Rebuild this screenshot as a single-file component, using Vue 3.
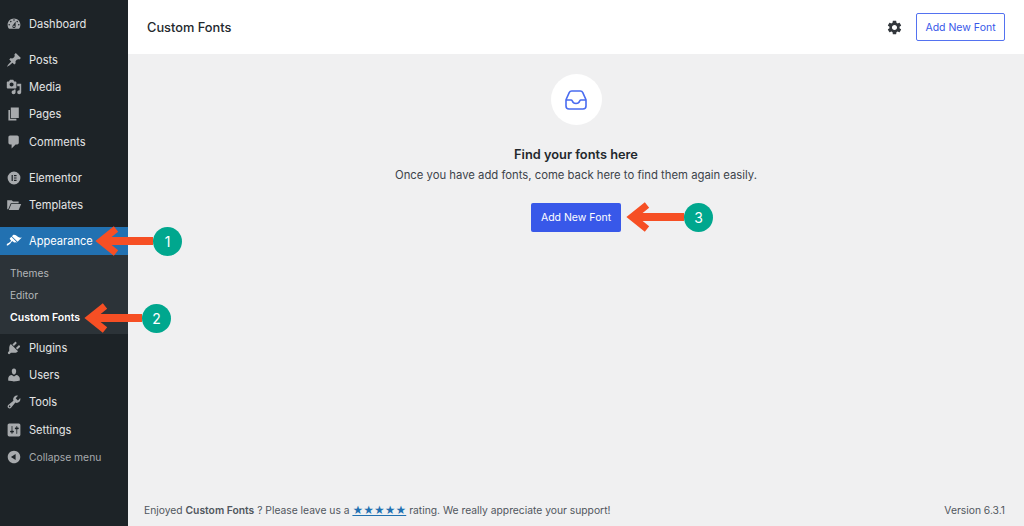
<script setup>
const topItems = [
  { label: 'Dashboard', d: 'M3.76 16h12.48c1.1-1.37 1.76-3.11 1.76-5 0-4.42-3.58-8-8-8s-8 3.58-8 8c0 1.89.66 3.63 1.76 5zM10 4c.55 0 1 .45 1 1s-.45 1-1 1-1-.45-1-1 .45-1 1-1zM6 6c.55 0 1 .45 1 1s-.45 1-1 1-1-.45-1-1 .45-1 1-1zm8 0c.55 0 1 .45 1 1s-.45 1-1 1-1-.45-1-1 .45-1 1-1zm-5.37 5.55L12 7v6c0 1.1-.9 2-2 2s-2-.9-2-2c0-.57.24-1.08.63-1.45zM4 10c.55 0 1 .45 1 1s-.45 1-1 1-1-.45-1-1 .45-1 1-1zm12 0c.55 0 1 .45 1 1s-.45 1-1 1-1-.45-1-1 .45-1 1-1zm-5 3c0-.55-.45-1-1-1s-1 .45-1 1 .45 1 1 1 1-.45 1-1z' }
]
const contentItems = [
  { label: 'Posts', d: 'M10.44 3.02l1.82-1.82 6.36 6.35-1.83 1.82c-1.05-.68-2.48-.57-3.41.36l-.75.75c-.92.93-1.04 2.35-.35 3.41l-1.83 1.82-2.41-2.41-2.8 2.79c-.42.42-3.38 2.71-3.8 2.29s1.86-3.39 2.28-3.81l2.79-2.79L4.1 9.36l1.83-1.82c1.05.69 2.48.57 3.4-.36l.75-.75c.93-.92 1.05-2.35.36-3.41z' },
  { label: 'Media', d: 'M13 11V4c0-.55-.45-1-1-1h-1.67L9 1H5L3.67 3H2c-.55 0-1 .45-1 1v7c0 .55.45 1 1 1h10c.55 0 1-.45 1-1zM7 4.5c1.38 0 2.5 1.12 2.5 2.5S8.38 9.5 7 9.5 4.5 8.38 4.5 7 5.62 4.5 7 4.5zM14 6h5v10.5c0 1.38-1.12 2.5-2.5 2.5S14 17.88 14 16.5s1.12-2.5 2.5-2.5c.17 0 .34.02.5.05V9h-3V6zm-4 8.05V13h2v3.5c0 1.38-1.12 2.5-2.5 2.5S7 17.88 7 16.5 8.12 14 9.5 14c.17 0 .34.02.5.05z' },
  { label: 'Pages', d: 'M6 15V2h10v13H6zm-1 1h8v2H3V5h2v11z' },
  { label: 'Comments', d: 'M5 2h9c1.1 0 2 .9 2 2v7c0 1.1-.9 2-2 2h-2l-5 5v-5H5c-1.1 0-2-.9-2-2V4c0-1.1.9-2 2-2z' }
]
const builderItems = [
  { label: 'Elementor', d: 'M10 2a8 8 0 1 0 0 16 8 8 0 0 0 0-16zM7 6.4h1.5v7.2H7V6.4zm3 0h3.2v1.4H10V6.4zm0 2.9h3.2v1.4H10V9.3zm0 2.9h3.2v1.4H10v-1.4z' },
  { label: 'Templates', d: 'M1.5 4h5.6l1.7 1.7h7v2H6L2.8 15.4H1.5V4zm5.2 4.7H19l-3.2 7.6H3.5l3.2-7.6z' }
]
const bottomItems = [
  { label: 'Plugins', d: 'M13.11 4.36L9.87 7.6 8 5.73l3.24-3.24c.35-.34 1.05-.2 1.56.32.52.51.66 1.21.31 1.55zm-8 1.77l.91-1.12 9.01 9.01-1.19.84c-.71.71-2.63 1.16-3.82 1.16H6.14L4.9 17.26c-.59.59-1.54.59-2.12 0-.59-.58-.59-1.53 0-2.12l1.24-1.24v-3.88c0-1.13.4-3.19 1.09-3.89zm7.26 3.97l3.24-3.24c.34-.35 1.04-.21 1.55.31.52.51.66 1.21.31 1.55l-3.24 3.25z' },
  { label: 'Users', d: 'M10 9.25c-2.27 0-2.73-3.44-2.73-3.44C7 4.02 7.82 2 9.97 2c2.16 0 2.98 2.02 2.71 3.81 0 0-.41 3.44-2.68 3.44zm0 2.57L12.72 10c2.39 0 4.52 2.33 4.52 4.53v2.49s-3.65 1.13-7.24 1.13c-3.65 0-7.24-1.13-7.24-1.13v-2.49c0-2.25 1.94-4.48 4.47-4.48z' },
  { label: 'Tools', d: 'M16.68 9.77c-1.34 1.34-3.3 1.67-4.95.99l-5.41 6.52c-.99.99-2.59.99-3.58 0s-.99-2.59 0-3.57l6.52-5.42c-.68-1.65-.35-3.61.99-4.95 1.28-1.28 3.12-1.62 4.72-1.06l-2.89 2.89 2.82 2.82 2.86-2.87c.53 1.58.18 3.39-1.08 4.65zM3.81 16.21c.4.39 1.04.39 1.43 0 .4-.4.4-1.04 0-1.43-.39-.4-1.03-.4-1.43 0-.39.39-.39 1.03 0 1.43z' },
  { label: 'Settings', d: 'M18 16V4c0-1.1-.9-2-2-2H4c-1.1 0-2 .9-2 2v12c0 1.1.9 2 2 2h12c1.1 0 2-.9 2-2zM8 11h1c.55 0 1 .45 1 1s-.45 1-1 1H8v1.5c0 .28-.22.5-.5.5s-.5-.22-.5-.5V13H6c-.55 0-1-.45-1-1s.45-1 1-1h1V5.5c0-.28.22-.5.5-.5s.5.22.5.5V11zm5-2h-1c-.55 0-1-.45-1-1s.45-1 1-1h1V5.5c0-.28.22-.5.5-.5s.5.22.5.5V7h1c.55 0 1 .45 1 1s-.45 1-1 1h-1v5.5c0 .28-.22.5-.5.5s-.5-.22-.5-.5V9z' }
]
const appearanceIcon = 'M14.48 11.06L7.41 3.99l1.5-1.5c.5-.56 2.3-.47 3.51.32 1.21.8 1.43 1.28 2.91 2.1 1.18.64 2.45 1.26 4.45.85zm-.71.71L6.7 4.7 4.93 6.47c-.39.39-.39 1.02 0 1.41l1.06 1.06c.39.39.39 1.03 0 1.42-.6.6-1.43 1.11-2.21 1.69-.35.26-.7.53-1.01.84C1.43 13.23.4 14.85 1.09 15.54c.69.69 2.31-.34 3.65-1.68.31-.31.58-.66.85-1.01.57-.78 1.08-1.61 1.69-2.21.39-.39 1.02-.39 1.41 0l1.06 1.06c.39.39 1.02.39 1.41 0z'
const collapseIcon = 'M10 2.16c4.33 0 7.84 3.51 7.84 7.84s-3.51 7.84-7.84 7.84S2.16 14.33 2.16 10 5.71 2.16 10 2.16zm2 11.72V6.12L6.18 9.97z'
const gearIcon = 'M19.14 12.94c.04-.3.06-.61.06-.94 0-.32-.02-.64-.07-.94l2.03-1.58c.18-.14.23-.41.12-.61l-1.92-3.32c-.12-.22-.37-.29-.59-.22l-2.39.96c-.5-.38-1.03-.7-1.62-.94l-.36-2.54c-.04-.24-.24-.41-.48-.41h-3.84c-.24 0-.43.17-.47.41l-.36 2.54c-.59.24-1.13.57-1.62.94l-2.39-.96c-.22-.08-.47 0-.59.22L2.74 8.87c-.12.21-.08.47.12.61l2.03 1.58c-.05.3-.09.63-.09.94s.02.64.07.94l-2.03 1.58c-.18.14-.23.41-.12.61l1.92 3.32c.12.22.37.29.59.22l2.39-.96c.5.38 1.03.7 1.62.94l.36 2.54c.05.24.24.41.48.41h3.84c.24 0 .44-.17.47-.41l.36-2.54c.59-.24 1.13-.56 1.62-.94l2.39.96c.22.08.47 0 .59-.22l1.92-3.32c.12-.22.07-.47-.12-.61l-2.01-1.58zM12 15.6c-1.98 0-3.6-1.62-3.6-3.6s1.62-3.6 3.6-3.6 3.6 1.62 3.6 3.6-1.62 3.6-3.6 3.6z'

const groups = [
  { key: 'top', items: topItems },
  { key: 'content', items: contentItems },
  { key: 'builder', items: builderItems }
]
const callouts = [
  { n: 1, cls: 'callout--one' },
  { n: 2, cls: 'callout--two' },
  { n: 3, cls: 'callout--three' }
]
</script>

<template>
  <div class="page">
    <aside class="sidebar">
      <ul v-for="group in groups" :key="group.key" class="menu">
        <li v-for="item in group.items" :key="item.label" class="menu__item">
          <svg class="menu__icon" viewBox="0 0 20 20"><path :d="item.d" /></svg>
          <span>{{ item.label }}</span>
        </li>
      </ul>

      <ul class="menu">
        <li class="menu__item menu__item--active">
          <svg class="menu__icon" viewBox="0 0 20 20"><path :d="appearanceIcon" /></svg>
          <span>Appearance</span>
        </li>
        <li class="submenu">
          <span class="submenu__item">Themes</span>
          <span class="submenu__item">Editor</span>
          <span class="submenu__item submenu__item--current">Custom Fonts</span>
        </li>
        <li v-for="item in bottomItems" :key="item.label" class="menu__item">
          <svg class="menu__icon" viewBox="0 0 20 20"><path :d="item.d" /></svg>
          <span>{{ item.label }}</span>
        </li>
        <li class="menu__item menu__item--collapse">
          <svg class="menu__icon" viewBox="0 0 20 20"><path :d="collapseIcon" /></svg>
          <span>Collapse menu</span>
        </li>
      </ul>
    </aside>

    <main class="main">
      <header class="topbar">
        <h1 class="topbar__title">Custom Fonts</h1>
        <div class="topbar__actions">
          <svg class="topbar__gear" viewBox="0 0 24 24"><path :d="gearIcon" /></svg>
          <button class="btn btn--outline">Add New Font</button>
        </div>
      </header>

      <section class="empty">
        <div class="empty__circle">
          <svg class="empty__icon" viewBox="0 0 24 24" fill="none">
            <path d="M2 14v4a3 3 0 0 0 3 3h14a3 3 0 0 0 3-3v-4M2 14v-2.2L5.2 4.6A2.8 2.8 0 0 1 7.8 3h8.4a2.8 2.8 0 0 1 2.6 1.6L22 11.8V14M2 12h5a1.3 1.3 0 0 1 1.2.8 4 4 0 0 0 7.6 0A1.3 1.3 0 0 1 17 12h5" />
          </svg>
        </div>
        <h2 class="empty__title">Find your fonts here</h2>
        <p class="empty__text">Once you have add fonts, come back here to find them again easily.</p>
        <button class="btn btn--solid">Add New Font</button>
      </section>

      <footer class="footer">
        <p>Enjoyed <b>Custom Fonts</b> ? Please leave us a <a class="footer__stars">★★★★★</a> rating. We really appreciate your support!</p>
        <span>Version 6.3.1</span>
      </footer>
    </main>

    <div v-for="c in callouts" :key="c.n" class="callout" :class="c.cls">
      <svg class="callout__arrow" viewBox="0 0 58 30" fill="none">
        <path d="M58 15H8" stroke-width="8" />
        <path d="M21 3 6 15l15 12" stroke-width="7" />
      </svg>
      <span class="callout__badge">{{ c.n }}</span>
    </div>
  </div>
</template>

<style>
html,
body {
  margin: 0;
  background: #f0f0f1;
}
</style>

<style scoped>
.page {
  position: relative;
  display: flex;
  width: 1024px;
  height: 526px;
  overflow: hidden;
  background: #f0f0f1;
  font-family: Inter, "Liberation Sans", sans-serif;
  color: #3c434a;
}

.sidebar {
  flex: 0 0 128px;
  padding-top: 10px;
  background: #1d2327;
  box-sizing: border-box;
}

.menu {
  margin: 0 0 8.7px;
  padding: 0;
  list-style: none;
}

.menu__item {
  display: flex;
  align-items: center;
  gap: 7px;
  height: 27.3px;
  padding-left: 6px;
  font-size: 11.1px;
  color: #e4e5e6;
}

.menu__icon {
  flex: none;
  width: 16px;
  height: 16px;
  fill: #a7aaad;
}

.menu__item--active {
  height: 28px;
  background: #2271b1;
  color: #fff;
}

.menu__item--active .menu__icon {
  fill: #fff;
}

.menu__item--collapse {
  font-size: 10.3px;
  color: #a7aaad;
}

.submenu {
  display: flex;
  flex-direction: column;
  padding: 6.4px 0 5.1px;
  background: #2c3338;
}

.submenu__item {
  height: 22.5px;
  padding-left: 10px;
  font-size: 10.2px;
  line-height: 22.5px;
  color: #b4b7ba;
}

.submenu__item--current {
  font-size: 10.5px;
  font-weight: 600;
  color: #fff;
}

.main {
  flex: 1;
  display: flex;
  flex-direction: column;
  min-width: 0;
}

.topbar {
  display: flex;
  align-items: center;
  justify-content: space-between;
  flex: 0 0 54px;
  padding: 0 19px;
  background: #fff;
}

.topbar__title {
  margin: 0;
  font-size: 12.8px;
  font-weight: 500;
  color: #23282d;
}

.topbar__actions {
  display: flex;
  align-items: center;
  gap: 13px;
}

.topbar__gear {
  width: 17px;
  height: 17px;
  fill: #32373c;
}

.btn {
  display: inline-flex;
  align-items: center;
  justify-content: center;
  width: 90px;
  height: 29px;
  padding: 0;
  border-radius: 2px;
  font-family: inherit;
  font-size: 10.5px;
  box-sizing: border-box;
}

.btn--outline {
  width: 89px;
  height: 28px;
  border: 1px solid #5372f0;
  background: #fff;
  color: #3858e9;
}

.btn--solid {
  border: 0;
  background: #3858e9;
  color: #fff;
}

.empty {
  flex: 1;
  display: flex;
  flex-direction: column;
  align-items: center;
  padding-top: 20px;
}

.empty__circle {
  display: flex;
  align-items: center;
  justify-content: center;
  width: 51px;
  height: 51px;
  border-radius: 50%;
  background: #fff;
}

.empty__icon {
  width: 24px;
  height: 24px;
  stroke: #4a6cf0;
  stroke-width: 1.6;
  stroke-linejoin: round;
}

.empty__title {
  margin: 21px 0 0;
  font-size: 12.8px;
  line-height: 17px;
  font-weight: 600;
  color: #23282d;
}

.empty__text {
  margin: 3.5px 0 19px;
  font-size: 11.3px;
  line-height: 17px;
  color: #3c434a;
}

.footer {
  display: flex;
  align-items: center;
  justify-content: space-between;
  flex: 0 0 32px;
  padding: 0 19px 0 16px;
  font-size: 10.3px;
  color: #50575e;
}

.footer p {
  margin: 0;
}

.footer b {
  font-weight: 600;
}

.footer__stars {
  color: #2271b1;
  text-decoration: underline;
}

.callout {
  position: absolute;
  display: flex;
  align-items: center;
}

.callout--one {
  left: 95px;
  top: 226px;
}

.callout--two {
  left: 84px;
  top: 303px;
}

.callout--three {
  left: 626px;
  top: 202px;
}

.callout__arrow {
  width: 58px;
  height: 30px;
  stroke: #f64f24;
}

.callout__badge {
  display: flex;
  align-items: center;
  justify-content: center;
  width: 29px;
  height: 29px;
  border-radius: 50%;
  background: #00a78e;
  font-size: 14px;
  color: #fff;
}
</style>
